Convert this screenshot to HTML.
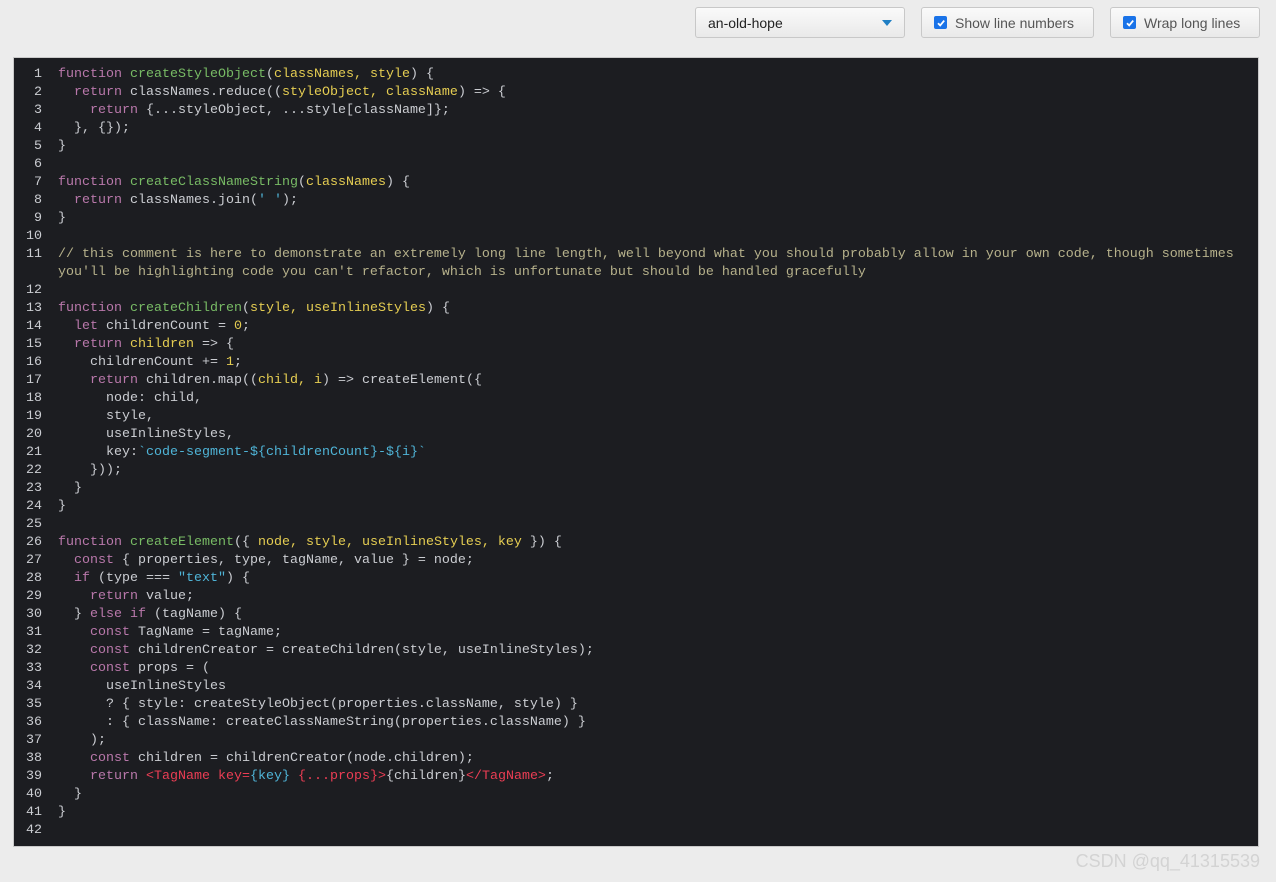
<!DOCTYPE html>
<html><head><meta charset="utf-8"><style>
html,body{margin:0;padding:0;width:1276px;height:882px;background:#ececec;overflow:hidden;font-family:"Liberation Sans",sans-serif;}
.ctl{position:absolute;top:7px;height:31px;border:1px solid #c8c8c8;border-radius:3px;background:linear-gradient(#fafafa,#e9e9e9);box-sizing:border-box;font-size:14px;color:#333;display:flex;align-items:center}
.sel{left:695px;width:210px;padding-left:12px;color:#222}
.sel .arr{position:absolute;right:12px;top:12px;width:0;height:0;border-left:5px solid transparent;border-right:5px solid transparent;border-top:6px solid #1f7fc4}
.cb{width:13px;height:13px;background:#1a73e8;border-radius:2px;margin-right:8px;display:flex;align-items:center;justify-content:center}
.code{position:absolute;left:13px;top:57px;width:1246px;height:790px;background:#1c1d21;border:1px solid #c9c9c9;box-sizing:border-box;padding-top:8px;font-family:"Liberation Mono",monospace;font-size:13.33px;line-height:18px;color:#cbcdd2}
.l{display:flex}
.n{width:28px;text-align:right;flex:none;margin-right:16px;color:#cbcdd2}
.t{white-space:pre-wrap;word-break:normal;width:1190px}
.k{color:#b978ab}.f{color:#78bb65}.p{color:#e5cd52}.s{color:#4fb4d7}.r{color:#eb3d54}.c{color:#b6b18b}
.wm{position:absolute;right:16px;top:851px;font-size:18px;color:#d3d3d3}
</style></head><body>
<div class="ctl sel">an-old-hope<span class="arr"></span></div>
<div class="ctl" style="left:921px;width:173px;padding-left:12px;color:#555"><span class="cb"><svg width="10" height="10" viewBox="0 0 10 10"><path d="M2 5.2 L4.2 7.4 L8.2 2.6" stroke="#fff" stroke-width="1.8" fill="none"/></svg></span>Show line numbers</div>
<div class="ctl" style="left:1110px;width:150px;padding-left:12px;color:#555"><span class="cb"><svg width="10" height="10" viewBox="0 0 10 10"><path d="M2 5.2 L4.2 7.4 L8.2 2.6" stroke="#fff" stroke-width="1.8" fill="none"/></svg></span>Wrap long lines</div>
<div class="code">
<div class="l"><span class="n">1</span><span class="t"><span class="k">function</span> <span class="f">createStyleObject</span>(<span class="p">classNames, style</span>) {</span></div>
<div class="l"><span class="n">2</span><span class="t">  <span class="k">return</span> classNames.reduce((<span class="p">styleObject, className</span>) =&gt; {</span></div>
<div class="l"><span class="n">3</span><span class="t">    <span class="k">return</span> {...styleObject, ...style[className]};</span></div>
<div class="l"><span class="n">4</span><span class="t">  }, {});</span></div>
<div class="l"><span class="n">5</span><span class="t">}</span></div>
<div class="l"><span class="n">6</span><span class="t"> </span></div>
<div class="l"><span class="n">7</span><span class="t"><span class="k">function</span> <span class="f">createClassNameString</span>(<span class="p">classNames</span>) {</span></div>
<div class="l"><span class="n">8</span><span class="t">  <span class="k">return</span> classNames.join(<span class="s">' '</span>);</span></div>
<div class="l"><span class="n">9</span><span class="t">}</span></div>
<div class="l"><span class="n">10</span><span class="t"> </span></div>
<div class="l"><span class="n">11</span><span class="t c">// this comment is here to demonstrate an extremely long line length, well beyond what you should probably allow in your own code, though sometimes you'll be highlighting code you can't refactor, which is unfortunate but should be handled gracefully</span></div>
<div class="l"><span class="n">12</span><span class="t"> </span></div>
<div class="l"><span class="n">13</span><span class="t"><span class="k">function</span> <span class="f">createChildren</span>(<span class="p">style, useInlineStyles</span>) {</span></div>
<div class="l"><span class="n">14</span><span class="t">  <span class="k">let</span> childrenCount = <span class="p">0</span>;</span></div>
<div class="l"><span class="n">15</span><span class="t">  <span class="k">return</span> <span class="p">children</span> =&gt; {</span></div>
<div class="l"><span class="n">16</span><span class="t">    childrenCount += <span class="p">1</span>;</span></div>
<div class="l"><span class="n">17</span><span class="t">    <span class="k">return</span> children.map((<span class="p">child, i</span>) =&gt; createElement({</span></div>
<div class="l"><span class="n">18</span><span class="t">      node: child,</span></div>
<div class="l"><span class="n">19</span><span class="t">      style,</span></div>
<div class="l"><span class="n">20</span><span class="t">      useInlineStyles,</span></div>
<div class="l"><span class="n">21</span><span class="t">      key:<span class="s">`code-segment-${childrenCount}-${i}`</span></span></div>
<div class="l"><span class="n">22</span><span class="t">    }));</span></div>
<div class="l"><span class="n">23</span><span class="t">  }</span></div>
<div class="l"><span class="n">24</span><span class="t">}</span></div>
<div class="l"><span class="n">25</span><span class="t"> </span></div>
<div class="l"><span class="n">26</span><span class="t"><span class="k">function</span> <span class="f">createElement</span>({ <span class="p">node, style, useInlineStyles, key</span> }) {</span></div>
<div class="l"><span class="n">27</span><span class="t">  <span class="k">const</span> { properties, type, tagName, value } = node;</span></div>
<div class="l"><span class="n">28</span><span class="t">  <span class="k">if</span> (type === <span class="s">"text"</span>) {</span></div>
<div class="l"><span class="n">29</span><span class="t">    <span class="k">return</span> value;</span></div>
<div class="l"><span class="n">30</span><span class="t">  } <span class="k">else</span> <span class="k">if</span> (tagName) {</span></div>
<div class="l"><span class="n">31</span><span class="t">    <span class="k">const</span> TagName = tagName;</span></div>
<div class="l"><span class="n">32</span><span class="t">    <span class="k">const</span> childrenCreator = createChildren(style, useInlineStyles);</span></div>
<div class="l"><span class="n">33</span><span class="t">    <span class="k">const</span> props = (</span></div>
<div class="l"><span class="n">34</span><span class="t">      useInlineStyles</span></div>
<div class="l"><span class="n">35</span><span class="t">      ? { style: createStyleObject(properties.className, style) }</span></div>
<div class="l"><span class="n">36</span><span class="t">      : { className: createClassNameString(properties.className) }</span></div>
<div class="l"><span class="n">37</span><span class="t">    );</span></div>
<div class="l"><span class="n">38</span><span class="t">    <span class="k">const</span> children = childrenCreator(node.children);</span></div>
<div class="l"><span class="n">39</span><span class="t">    <span class="k">return</span> <span class="r">&lt;TagName key=</span><span class="s">{key}</span> <span class="r">{...props}&gt;</span>{children}<span class="r">&lt;/TagName&gt;</span>;</span></div>
<div class="l"><span class="n">40</span><span class="t">  }</span></div>
<div class="l"><span class="n">41</span><span class="t">}</span></div>
<div class="l"><span class="n">42</span><span class="t"> </span></div>
</div>
<div class="wm">CSDN @qq_41315539</div>
</body></html>
